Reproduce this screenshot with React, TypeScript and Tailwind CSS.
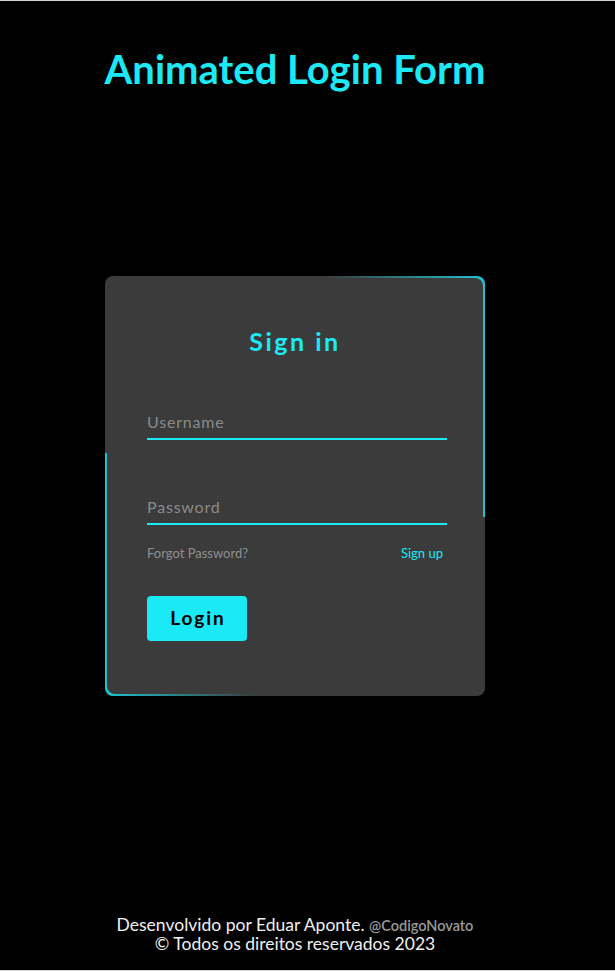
export default function App() {
  return (
    <div className="w-full h-[971px] bg-black border-t border-b border-[#d4d4d4] flex flex-col font-['Lato',sans-serif] overflow-hidden">
      <div className="w-[590px] flex-1 flex flex-col items-center">
        <h1 className="mt-[44px] text-[40px] leading-[48px] font-bold text-[#1be9f6] text-center">
          Animated Login Form
        </h1>

        {/* Card with animated border */}
        <div className="relative mt-[183px] w-[380px] h-[420px] rounded-lg bg-[#3b3b3b] overflow-hidden">
          <div className="absolute top-0 right-0 w-[160px] h-[241px] bg-gradient-to-r from-transparent to-[#1fc3cf]" />
          <div className="absolute bottom-0 left-0 w-[150px] h-[243px] bg-gradient-to-l from-transparent to-[#1fc3cf]" />

          <form className="relative m-[2px] h-[416px] rounded-lg bg-[#3b3b3b] pl-[40px] pr-[36px] pt-[48px] flex flex-col">
            <h2 className="pr-[4px] text-[25px] leading-[30px] font-bold tracking-[0.1em] text-[#1be9f6] text-center">
              Sign in
            </h2>

            <div className="mt-[56px] flex flex-col">
              <span className="text-[16px] leading-[20px] tracking-[0.05em] text-[#8a8a8a]">Username</span>
              <div className="mt-[6px] h-[2px] bg-[#1be9f6]" />
            </div>

            <div className="mt-[57px] flex flex-col">
              <span className="text-[16px] leading-[20px] tracking-[0.05em] text-[#8a8a8a]">Password</span>
              <div className="mt-[6px] h-[2px] bg-[#1be9f6]" />
            </div>

            <div className="mt-[20px] pr-[4px] flex justify-between text-[13px] leading-[16px]">
              <a className="text-[#8f8f8f]">Forgot Password?</a>
              <a className="text-[#1be9f6]">Sign up</a>
            </div>

            <button
              type="button"
              className="mt-[35px] w-[100px] h-[45px] rounded-[4px] bg-[#1be9f6] text-black text-[19px] font-bold tracking-[0.1em] pl-[2px]"
            >
              Login
            </button>
          </form>
        </div>

        {/* Footer */}
        <footer className="mt-auto pb-[17px] text-center text-[17.5px] leading-[18px] text-[#f0f0f0]">
          <p>
            Desenvolvido por Eduar Aponte.{' '}
            <span className="text-[14.5px] font-semibold text-[#9a9a9a]">@CodigoNovato</span>
          </p>
          <p>© Todos os direitos reservados 2023</p>
        </footer>
      </div>
    </div>
  );
}
